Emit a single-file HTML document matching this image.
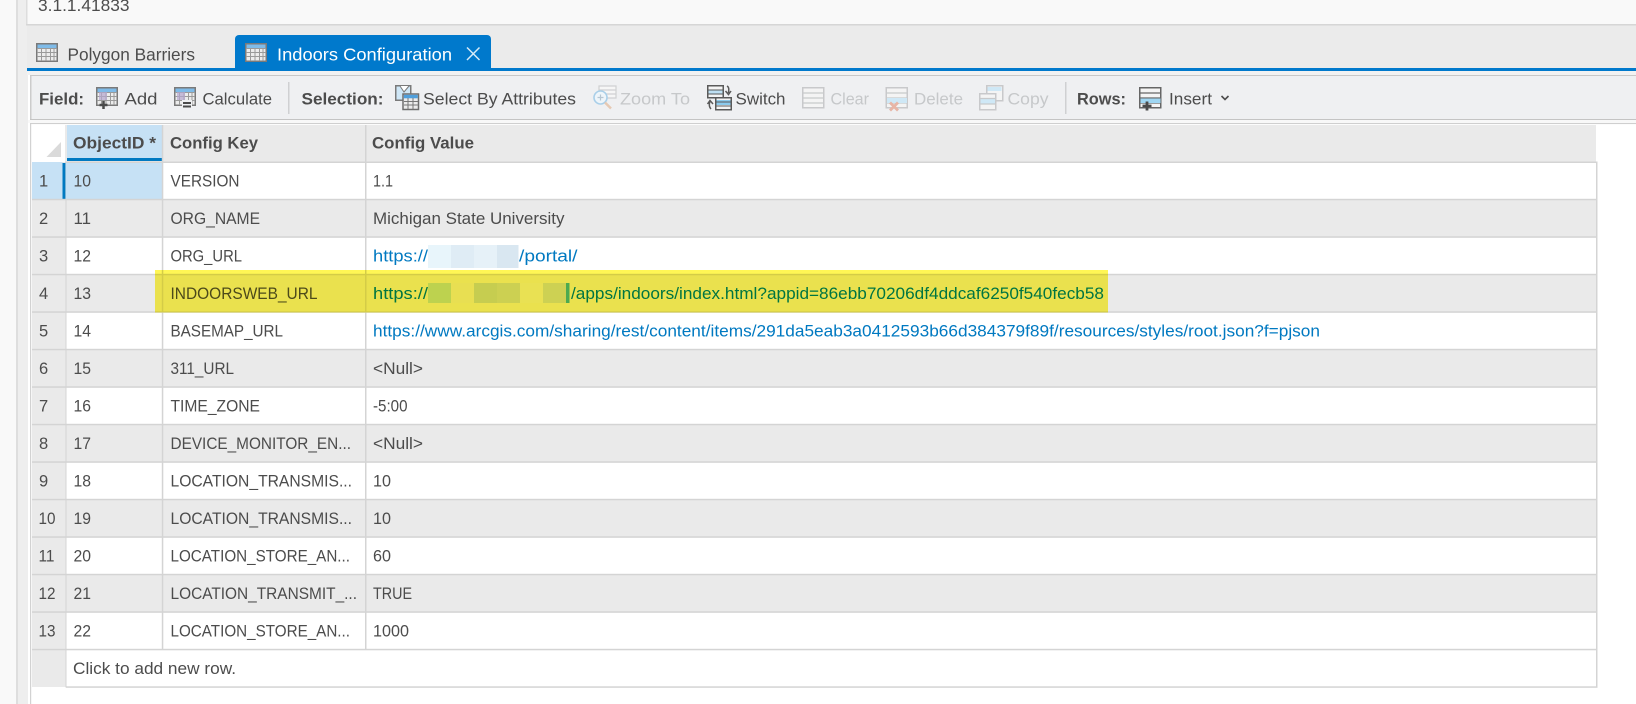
<!DOCTYPE html>
<html><head><meta charset="utf-8"><title>Indoors Configuration</title>
<style>
html,body{margin:0;padding:0;background:#fff;overflow:hidden}
svg{display:block}
text{font-family:"Liberation Sans",sans-serif;font-size:16.5px;fill:#4c4c4c}
.b{font-weight:bold}
.l{fill:#0079c1}
.d{fill:#c6c8ca}
.t{font-size:17.5px}
</style></head><body>
<svg width="1636" height="704" viewBox="0 0 1636 704" xmlns="http://www.w3.org/2000/svg">
<defs>
<g id="tbl">
<rect x=".75" y=".75" width="20.5" height="17.5" fill="#ececec" stroke="#7a7a7a" stroke-width="1.5"/>
<rect x="1.5" y="1.5" width="19" height="3.5" fill="#7fbbe8"/>
<path d="M1 5.5H21M1 9.5H21M1 13.5H21M5.5 5V18M10 5V18M14.500 5V18M18 5V18" stroke="#9a9a9a" stroke-width="1" fill="none"/>
</g>
<g id="rowsI">
<rect x=".75" y=".75" width="21" height="20" fill="#f4f4f4" stroke="currentColor" stroke-width="1.5"/>
<path d="M1 6H22M1 11H22M1 16H22" stroke="currentColor" stroke-width="1.2"/>
</g>
</defs>

<!-- frame -->
<rect width="1636" height="704" fill="#fff"/>
<rect x="0" y="0" width="16" height="704" fill="#f9f9f9"/>
<rect x="16" y="0" width="2" height="704" fill="#dedede"/>
<rect x="18" y="0" width="10" height="704" fill="#eeeeee"/>
<rect x="27" y="0" width="1609" height="24" fill="#f9f9f9"/>
<rect x="26" y="0" width="1.5" height="25" fill="#dddddd"/>
<rect x="26" y="24" width="1610" height="1.5" fill="#d6d6d6"/>
<text x="38" y="11" textLength="91.500" lengthAdjust="spacingAndGlyphs">3.1.1.41833</text>

<!-- tabs -->
<rect x="27" y="25.5" width="1609" height="43" fill="#ebebeb"/>
<use href="#tbl" x="36" y="43"/>
<text class="t" x="67.5" y="60.500" textLength="127.5" lengthAdjust="spacingAndGlyphs">Polygon Barriers</text>
<path d="M235 68V39a4 4 0 0 1 4-4H487a4 4 0 0 1 4 4V68Z" fill="#0079cc"/>
<use href="#tbl" x="245" y="43"/>
<text class="t" x="277" y="60.500" textLength="175" lengthAdjust="spacingAndGlyphs" style="fill:#fff">Indoors Configuration</text>
<path d="M467 47.500L479.500 60M479.500 47.500L467 60" stroke="#d7ebf8" stroke-width="1.500" fill="none"/>
<rect x="27" y="68" width="1609" height="3" fill="#0079cc"/>

<!-- toolbar -->
<rect x="27" y="71" width="1609" height="4" fill="#f2f2f2"/>
<rect x="30" y="75" width="1606" height="1.200" fill="#c8c8c8"/>
<rect x="30" y="76" width="1606" height="43" fill="#eff0f2"/>
<rect x="30" y="76" width="1.500" height="44" fill="#cccccc"/>
<rect x="30" y="119" width="1606" height="1.200" fill="#c4c4c4"/>
<rect x="28" y="120" width="1608" height="3" fill="#f8f8f8"/>
<rect x="30" y="123" width="1606" height="1.200" fill="#cfcfcf"/>

<text class="b" x="39" y="104.500" textLength="45" lengthAdjust="spacingAndGlyphs">Field:</text>
<g transform="translate(96,87)"><use href="#tbl"/><rect x="3" y="5" width="8" height="8" fill="#b5a6cf" opacity=".7"/><path d="M7.500 14V22M3.500 18H11.500" stroke="#4a4a4a" stroke-width="2.500"/></g>
<text x="124.500" y="104.500" textLength="33" lengthAdjust="spacingAndGlyphs">Add</text>
<g transform="translate(174,87)"><use href="#tbl"/><rect x="3" y="5" width="8" height="8" fill="#b5a6cf" opacity=".7"/><rect x="8" y="13" width="10" height="8" fill="#eff0f2"/><path d="M9 16H17M9 19.500H17" stroke="#4a4a4a" stroke-width="2"/></g>
<text x="202.500" y="104.500" textLength="69.500" lengthAdjust="spacingAndGlyphs">Calculate</text>
<rect x="288" y="82" width="1.500" height="32" fill="#cfd0d2"/>
<text class="b" x="301.500" y="104.500" textLength="82" lengthAdjust="spacingAndGlyphs">Selection:</text>
<g transform="translate(395,85)">
<rect x=".75" y=".75" width="15" height="14.500" fill="#cfe7f7" stroke="#7a7a7a" stroke-width="1.500"/>
<path d="M5 1L9 7L14 1" fill="#fff" stroke="#7a7a7a" stroke-width="1"/>
<rect x="8" y="9" width="15.500" height="15.500" fill="#ececec" stroke="#6e6e6e" stroke-width="1.500"/>
<rect x="8.800" y="9.800" width="14" height="3.500" fill="#4f9fdc"/>
<path d="M9 16.500H23M9 20H23M13 13V24M18 13V24" stroke="#777" stroke-width="1"/>
</g>
<text x="423" y="104.500" textLength="153" lengthAdjust="spacingAndGlyphs">Select By Attributes</text>

<g transform="translate(592,85)">
<path d="M7 1H24V13H7Z" fill="#f6f6f6" stroke="#cfd0d2" stroke-width="1.200"/>
<path d="M7 5H24M7 9H24" stroke="#cfd0d2" stroke-width="1.200"/>
<circle cx="8.500" cy="12.500" r="6.500" fill="#eef5fa" stroke="#a9cfe9" stroke-width="1.600"/>
<path d="M5.500 12.500H11.500M8.500 9.500V15.500" stroke="#b6c6d2" stroke-width="1.200"/>
<path d="M13 17.500L19 23.500" stroke="#e6c9b3" stroke-width="2.500"/>
</g>
<text class="d" x="620" y="104.500" textLength="70" lengthAdjust="spacingAndGlyphs">Zoom To</text>

<g transform="translate(707,85)">
<rect x=".75" y=".75" width="15.500" height="12" fill="#f4f4f4" stroke="#5a5a5a" stroke-width="1.500"/>
<rect x="1.500" y="5" width="14" height="3.500" fill="#bfe0f3"/>
<path d="M1 5H16M1 9H16" stroke="#5a5a5a"/>
<rect x="8.750" y="12.750" width="15.500" height="12" fill="#f4f4f4" stroke="#5a5a5a" stroke-width="1.500"/>
<rect x="9.500" y="15" width="14" height="5" fill="#8ccbed"/>
<path d="M9 17H24M9 21H24" stroke="#5a5a5a"/>
<path d="M20 1C22 2 22 4 21.500 8M18.500 6L21.500 9.500L24 6" fill="none" stroke="#5a5a5a" stroke-width="1.500"/>
<path d="M4 24C2 22 2 19 3 16M.500 19L3 15.500L6 19" fill="none" stroke="#5a5a5a" stroke-width="1.500"/>
</g>
<text x="735.500" y="104.500" textLength="50" lengthAdjust="spacingAndGlyphs">Switch</text>

<g transform="translate(802,87)" color="#c8c9cb"><use href="#rowsI"/></g>
<text class="d" x="830.500" y="104.500" textLength="38.500" lengthAdjust="spacingAndGlyphs">Clear</text>
<g transform="translate(885.500,87)" color="#c8c9cb"><use href="#rowsI"/><rect x="1.500" y="11" width="20" height="5" fill="#cfe8f6"/>
<path d="M4.500 15.500L12.500 23.500M12.500 15.500L4.500 23.500" stroke="#e7b5a6" stroke-width="2.800"/></g>
<text class="d" x="914" y="104.500" textLength="49" lengthAdjust="spacingAndGlyphs">Delete</text>
<g transform="translate(979,85)">
<rect x="7.750" y=".75" width="16" height="15" fill="#f4f4f4" stroke="#c8c9cb" stroke-width="1.500"/>
<rect x="8.500" y="2" width="14" height="4" fill="#cfe8f6"/>
<rect x=".75" y="8.750" width="16" height="16" fill="#f4f4f4" stroke="#c8c9cb" stroke-width="1.500"/>
<rect x="1.500" y="14" width="14.500" height="5" fill="#cfe8f6"/>
<path d="M1 13.500H17M1 19H17" stroke="#c8c9cb" stroke-width="1.200"/>
</g>
<text class="d" x="1007.500" y="104.500" textLength="41" lengthAdjust="spacingAndGlyphs">Copy</text>
<rect x="1065" y="82" width="1.500" height="32" fill="#cfd0d2"/>
<text class="b" x="1077" y="104.500" textLength="49" lengthAdjust="spacingAndGlyphs">Rows:</text>
<g transform="translate(1139,87)" color="#666"><use href="#rowsI"/><rect x="1.500" y="11.500" width="20" height="4.500" fill="#9fd6f2"/>
<path d="M8 14.500V23.500M3.500 19H12.500" stroke="#4a4a4a" stroke-width="2.800"/></g>
<text x="1169" y="104.500" textLength="43" lengthAdjust="spacingAndGlyphs">Insert</text>
<path d="M1221.500 96L1225 99.500L1228.500 96" fill="none" stroke="#4c4c4c" stroke-width="1.600"/>

<!-- table -->
<rect x="28" y="124.200" width="1608" height="580" fill="#fff"/>
<rect x="30" y="124" width="1.200" height="580" fill="#d2d2d2"/>
<rect x="65" y="125" width="1531" height="37" fill="#eaeaea"/>
<rect x="67" y="125" width="95" height="33" fill="#c6e1f5"/>
<rect x="67" y="158" width="95" height="3" fill="#0079c1"/>
<path d="M61 142V157H46.500Z" fill="#dadada"/>
<rect x="32" y="162" width="34" height="525" fill="#eaeaea"/>

<!-- row fills -->
<rect x="66" y="162" width="1530" height="37.500" fill="#fff"/>
<rect x="32" y="162" width="30.500" height="37.500" fill="#c6e1f5"/>
<rect x="62.500" y="163" width="3" height="36" fill="#0079c1"/>
<rect x="66" y="163" width="96" height="36.500" fill="#c6e1f5"/>
<rect x="66" y="199.500" width="1530" height="37.500" fill="#eaeaea"/>
<rect x="66" y="237" width="1530" height="37.500" fill="#fff"/>
<rect x="66" y="274.500" width="1530" height="37.500" fill="#eaeaea"/>
<rect x="66" y="312" width="1530" height="37.500" fill="#fff"/>
<rect x="66" y="349.500" width="1530" height="37.500" fill="#eaeaea"/>
<rect x="66" y="387" width="1530" height="37.500" fill="#fff"/>
<rect x="66" y="424.500" width="1530" height="37.500" fill="#eaeaea"/>
<rect x="66" y="462" width="1530" height="37.500" fill="#fff"/>
<rect x="66" y="499.500" width="1530" height="37.500" fill="#eaeaea"/>
<rect x="66" y="537" width="1530" height="37.500" fill="#fff"/>
<rect x="66" y="574.500" width="1530" height="37.500" fill="#eaeaea"/>
<rect x="66" y="612" width="1530" height="37.500" fill="#fff"/>

<!-- grid -->
<g fill="#d4d4d4">
<rect x="32" y="198.800" width="1565.500" height="1.500"/>
<rect x="32" y="236.300" width="1565.500" height="1.500"/>
<rect x="32" y="273.800" width="1565.500" height="1.500"/>
<rect x="32" y="311.300" width="1565.500" height="1.500"/>
<rect x="32" y="348.800" width="1565.500" height="1.500"/>
<rect x="32" y="386.300" width="1565.500" height="1.500"/>
<rect x="32" y="423.800" width="1565.500" height="1.500"/>
<rect x="32" y="461.300" width="1565.500" height="1.500"/>
<rect x="32" y="498.800" width="1565.500" height="1.500"/>
<rect x="32" y="536.300" width="1565.500" height="1.500"/>
<rect x="32" y="573.800" width="1565.500" height="1.500"/>
<rect x="32" y="611.300" width="1565.500" height="1.500"/>
<rect x="32" y="648.800" width="1565.500" height="1.500"/>
<rect x="66" y="686.300" width="1531.500" height="1.500"/>
<rect x="65" y="161.500" width="1532.500" height="1.500"/>
<rect x="65.500" y="649" width="1" height="38.500"/>
<rect x="65.500" y="200" width="1" height="449"/>
<rect x="161.800" y="125" width="1.500" height="524"/>
<rect x="365" y="125" width="1.500" height="524"/>
<rect x="1596" y="162" width="1.500" height="525.500"/>
</g>

<g transform="translate(0,-.7)">
<!-- header text -->
<text class="b" x="73" y="149" textLength="83" lengthAdjust="spacingAndGlyphs">ObjectID *</text>
<text class="b" x="170" y="149" textLength="88" lengthAdjust="spacingAndGlyphs">Config Key</text>
<text class="b" x="372" y="149" textLength="102" lengthAdjust="spacingAndGlyphs">Config Value</text>

<!-- row numbers -->
<text x="39" y="187">1</text>
<text x="39" y="224.500">2</text>
<text x="39" y="262">3</text>
<text x="39" y="299.500">4</text>
<text x="39" y="337">5</text>
<text x="39" y="374.500">6</text>
<text x="39" y="412">7</text>
<text x="39" y="449.500">8</text>
<text x="39" y="487">9</text>
<text x="38.500" y="524.500" textLength="17" lengthAdjust="spacingAndGlyphs">10</text>
<text x="38.500" y="562" textLength="16" lengthAdjust="spacingAndGlyphs">11</text>
<text x="38.500" y="599.500" textLength="17" lengthAdjust="spacingAndGlyphs">12</text>
<text x="38.500" y="637" textLength="17" lengthAdjust="spacingAndGlyphs">13</text>

<!-- object ids -->
<text x="73.500" y="187" textLength="17.500" lengthAdjust="spacingAndGlyphs">10</text>
<text x="73.500" y="224.500" textLength="17.500" lengthAdjust="spacingAndGlyphs">11</text>
<text x="73.500" y="262" textLength="17.500" lengthAdjust="spacingAndGlyphs">12</text>
<text x="73.500" y="299.500" textLength="17.500" lengthAdjust="spacingAndGlyphs">13</text>
<text x="73.500" y="337" textLength="17.500" lengthAdjust="spacingAndGlyphs">14</text>
<text x="73.500" y="374.500" textLength="17.500" lengthAdjust="spacingAndGlyphs">15</text>
<text x="73.500" y="412" textLength="17.500" lengthAdjust="spacingAndGlyphs">16</text>
<text x="73.500" y="449.500" textLength="17.500" lengthAdjust="spacingAndGlyphs">17</text>
<text x="73.500" y="487" textLength="17.500" lengthAdjust="spacingAndGlyphs">18</text>
<text x="73.500" y="524.500" textLength="17.500" lengthAdjust="spacingAndGlyphs">19</text>
<text x="73.500" y="562" textLength="17.500" lengthAdjust="spacingAndGlyphs">20</text>
<text x="73.500" y="599.500" textLength="17.500" lengthAdjust="spacingAndGlyphs">21</text>
<text x="73.500" y="637" textLength="17.500" lengthAdjust="spacingAndGlyphs">22</text>

<!-- keys -->
<text x="170.500" y="187" textLength="69" lengthAdjust="spacingAndGlyphs">VERSION</text>
<text x="170.500" y="224.500" textLength="89.500" lengthAdjust="spacingAndGlyphs">ORG_NAME</text>
<text x="170.500" y="262" textLength="71.500" lengthAdjust="spacingAndGlyphs">ORG_URL</text>
<text x="170.500" y="299.500" textLength="147" lengthAdjust="spacingAndGlyphs">INDOORSWEB_URL</text>
<text x="170.500" y="337" textLength="112.500" lengthAdjust="spacingAndGlyphs">BASEMAP_URL</text>
<text x="170.500" y="374.500" textLength="63.500" lengthAdjust="spacingAndGlyphs">311_URL</text>
<text x="170.500" y="412" textLength="89.500" lengthAdjust="spacingAndGlyphs">TIME_ZONE</text>
<text x="170.500" y="449.500" textLength="180.500" lengthAdjust="spacingAndGlyphs">DEVICE_MONITOR_EN...</text>
<text x="170.500" y="487" textLength="181.500" lengthAdjust="spacingAndGlyphs">LOCATION_TRANSMIS...</text>
<text x="170.500" y="524.500" textLength="181.500" lengthAdjust="spacingAndGlyphs">LOCATION_TRANSMIS...</text>
<text x="170.500" y="562" textLength="179.500" lengthAdjust="spacingAndGlyphs">LOCATION_STORE_AN...</text>
<text x="170.500" y="599.500" textLength="186.500" lengthAdjust="spacingAndGlyphs">LOCATION_TRANSMIT_...</text>
<text x="170.500" y="637" textLength="179.500" lengthAdjust="spacingAndGlyphs">LOCATION_STORE_AN...</text>

<!-- values -->
<text x="373" y="187" textLength="20" lengthAdjust="spacingAndGlyphs">1.1</text>
<text x="373" y="224.500" textLength="191.500" lengthAdjust="spacingAndGlyphs">Michigan State University</text>
<text class="l" x="373" y="262" textLength="55" lengthAdjust="spacingAndGlyphs">https://</text>
<text class="l" x="519" y="262" textLength="58.500" lengthAdjust="spacingAndGlyphs">/portal/</text>
<text class="l" x="373" y="299.500" textLength="55" lengthAdjust="spacingAndGlyphs">https://</text>
<text class="l" x="571" y="299.500" textLength="533" lengthAdjust="spacingAndGlyphs">/apps/indoors/index.html?appid=86ebb70206df4ddcaf6250f540fecb58</text>
<text class="l" x="373" y="337" textLength="947" lengthAdjust="spacingAndGlyphs">https://www.arcgis.com/sharing/rest/content/items/291da5eab3a0412593b66d384379f89f/resources/styles/root.json?f=pjson</text>
<text x="373" y="374.500" textLength="50" lengthAdjust="spacingAndGlyphs">&lt;Null&gt;</text>
<text x="373" y="412" textLength="34.500" lengthAdjust="spacingAndGlyphs">-5:00</text>
<text x="373" y="449.500" textLength="50" lengthAdjust="spacingAndGlyphs">&lt;Null&gt;</text>
<text x="373" y="487" textLength="18" lengthAdjust="spacingAndGlyphs">10</text>
<text x="373" y="524.500" textLength="18" lengthAdjust="spacingAndGlyphs">10</text>
<text x="373" y="562" textLength="18" lengthAdjust="spacingAndGlyphs">60</text>
<text x="373" y="599.500" textLength="39" lengthAdjust="spacingAndGlyphs">TRUE</text>
<text x="373" y="637" textLength="36" lengthAdjust="spacingAndGlyphs">1000</text>
<text x="73" y="674.500" textLength="163" lengthAdjust="spacingAndGlyphs">Click to add new row.</text>
</g>

<!-- blurred org url -->
<rect x="428" y="245" width="23" height="23" fill="#e8f5fb"/>
<rect x="451" y="245" width="23" height="23" fill="#dfecf5"/>
<rect x="474" y="245" width="23" height="23" fill="#e6f1f8"/>
<rect x="497" y="245" width="21.500" height="23" fill="#d9e7f1"/>

<!-- highlight -->
<rect x="155" y="270" width="953" height="42.500" fill="#fff655" style="mix-blend-mode:multiply"/>

<!-- blurred indoors url -->
<rect x="428" y="283" width="23" height="20" fill="#bdd24f"/>
<rect x="451" y="283" width="23" height="20" fill="#e8df52"/>
<rect x="474" y="283" width="23" height="20" fill="#c6cd50"/>
<rect x="497" y="283" width="23" height="20" fill="#ccd052"/>
<rect x="520" y="283" width="23" height="20" fill="#e9e153"/>
<rect x="543" y="283" width="23" height="20" fill="#cdd153"/>
<rect x="566" y="283" width="3.500" height="20" fill="#4caa50"/>
</svg>
</body></html>
